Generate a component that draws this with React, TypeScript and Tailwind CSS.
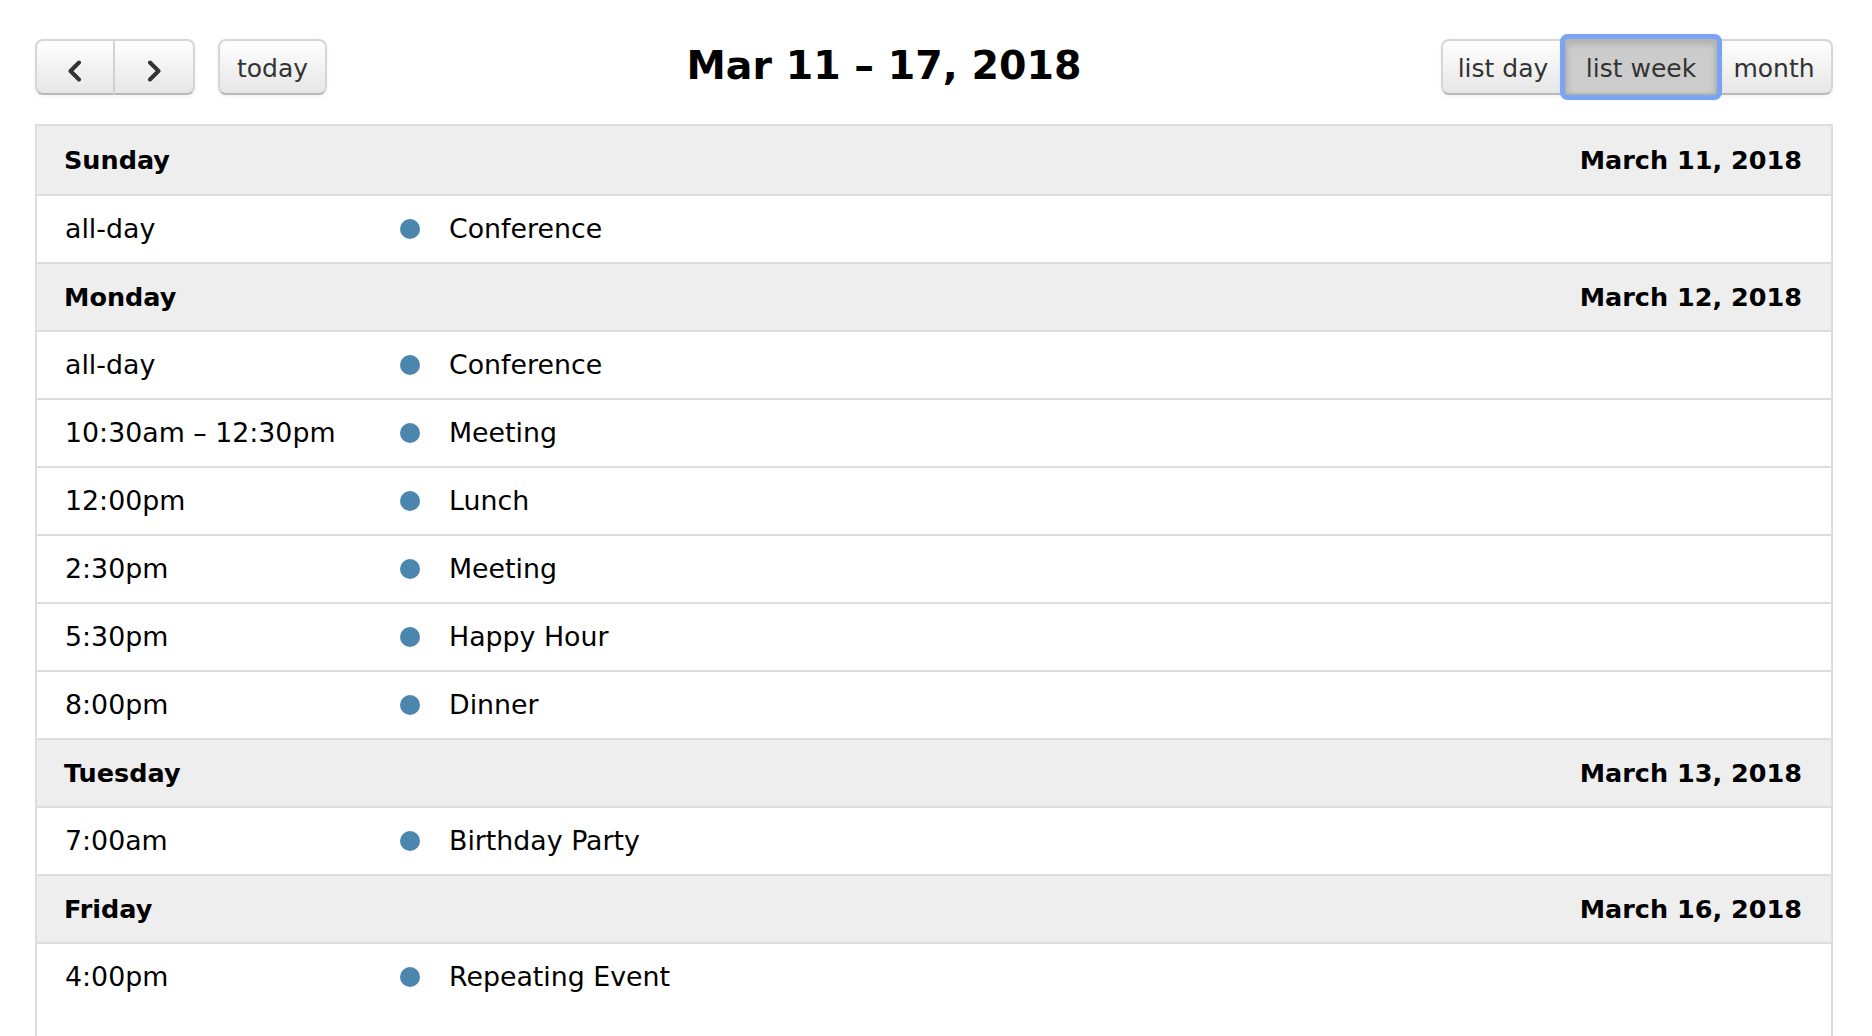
import React from 'react'

type CalEvent = { time: string; title: string }
type Day = { name: string; date: string; events: CalEvent[] }

const days: Day[] = [
  { name: 'Sunday', date: 'March 11, 2018', events: [{ time: 'all-day', title: 'Conference' }] },
  {
    name: 'Monday',
    date: 'March 12, 2018',
    events: [
      { time: 'all-day', title: 'Conference' },
      { time: '10:30am – 12:30pm', title: 'Meeting' },
      { time: '12:00pm', title: 'Lunch' },
      { time: '2:30pm', title: 'Meeting' },
      { time: '5:30pm', title: 'Happy Hour' },
      { time: '8:00pm', title: 'Dinner' },
    ],
  },
  { name: 'Tuesday', date: 'March 13, 2018', events: [{ time: '7:00am', title: 'Birthday Party' }] },
  { name: 'Friday', date: 'March 16, 2018', events: [{ time: '4:00pm', title: 'Repeating Event' }] },
]

const btn =
  'h-[56px] flex items-center justify-center pt-[4px] border-2 border-[#d6d6d6] border-b-[#b8b8b8] bg-gradient-to-b from-white to-[#e6e6e6] text-[25px] text-[#333] shadow-[0_2px_4px_rgba(0,0,0,0.05)]'

function Chevron({ dir }: { dir: 'left' | 'right' }) {
  return (
    <svg width="18" height="22" viewBox="0 0 18 22" fill="none" className="mt-[4px]">
      <path
        d={dir === 'left' ? 'M13 2.5 L4.5 11 L13 19.5' : 'M5 2.5 L13.5 11 L5 19.5'}
        stroke="#333"
        strokeWidth="4"
        strokeLinecap="round"
        strokeLinejoin="round"
      />
    </svg>
  )
}

export default function App() {
  let rowIndex = 0

  return (
    <div className="h-[1036px] overflow-hidden bg-white pl-[35px] pr-[39px] flex flex-col font-['DejaVu_Sans','Verdana',sans-serif] text-black">
      {/* toolbar */}
      <div className="flex items-start justify-between pt-[39px] h-[124px] shrink-0">
        <div className="flex gap-[23px]">
          <div className="flex">
            <button className={`${btn} w-[80px] rounded-l-[8px]`}>
              <Chevron dir="left" />
            </button>
            <button className={`${btn} w-[80px] rounded-r-[8px] border-l-0`}>
              <Chevron dir="right" />
            </button>
          </div>
          <button className={`${btn} w-[109px] rounded-[8px]`}>today</button>
        </div>

        <h2 className="text-[39.5px] font-bold leading-[56px] mt-[-2px] whitespace-nowrap">
          Mar 11 – 17, 2018
        </h2>

        <div className="flex">
          <button className={`${btn} w-[124px] rounded-l-[8px]`}>list day</button>
          <button className="relative z-10 h-[56px] w-[152px] flex items-center justify-center pt-[4px] border-2 border-[#b5b5b5] bg-[#cccccc] text-[25px] text-[#333] shadow-[inset_0_3px_6px_rgba(0,0,0,0.15),0_0_3px_4px_rgba(123,163,244,0.45)] ring-[5px] ring-[#7ba3f4] rounded-[3px]">
            list week
          </button>
          <button className={`${btn} w-[116px] rounded-r-[8px] border-l-0`}>month</button>
        </div>
      </div>

      {/* list */}
      <div className="flex-1 border-2 border-b-0 border-[#dddddd]">
        {days.map((day) => {
          const headerTop = rowIndex++ > 0
          return (
            <React.Fragment key={day.date}>
              <div
                className={`h-[68px] flex items-center justify-between pl-[27px] pr-[29px] bg-[#eeeeee] font-bold text-[25.5px] ${
                  headerTop ? 'border-t-2 border-[#dddddd]' : 'h-[66px]'
                }`}
              >
                <span>{day.name}</span>
                <span>{day.date}</span>
              </div>
              {day.events.map((ev, i) => {
                rowIndex++
                return (
                  <div
                    key={i}
                    className="h-[68px] flex items-center border-t-2 border-[#dddddd] text-[26.8px]"
                  >
                    <div className="w-[363px] pl-[28px] whitespace-nowrap">{ev.time}</div>
                    <span className="w-[20px] h-[20px] rounded-full bg-[#4a86ad] shrink-0" />
                    <div className="pl-[29px] whitespace-nowrap">{ev.title}</div>
                  </div>
                )
              })}
            </React.Fragment>
          )
        })}
      </div>
    </div>
  )
}
